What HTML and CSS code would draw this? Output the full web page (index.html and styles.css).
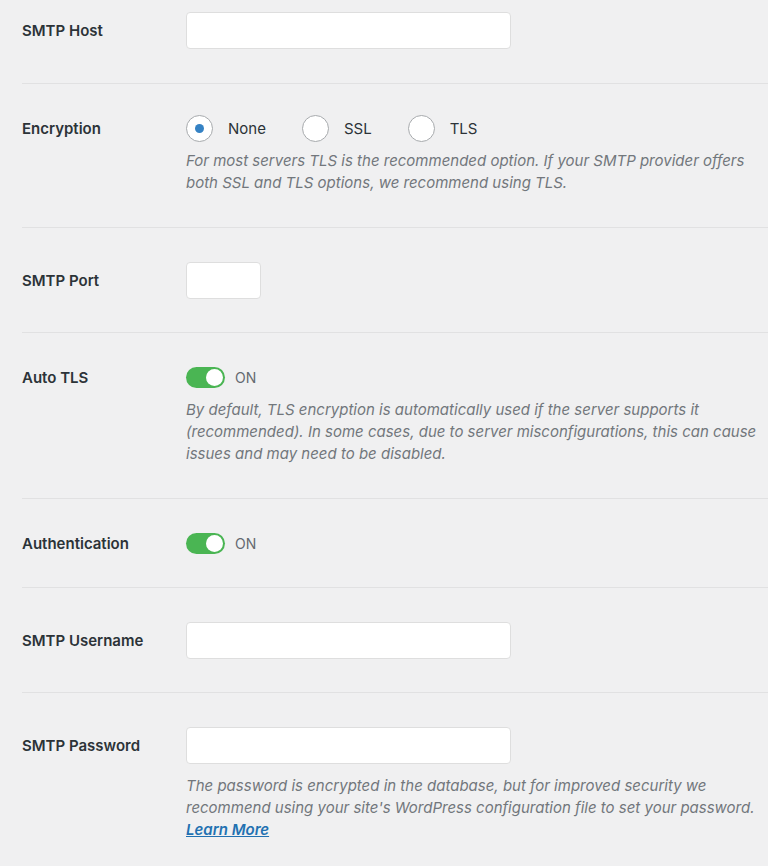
FILE: index.html
```html
<!DOCTYPE html>
<html lang="en">
<head>
<meta charset="utf-8">
<title>SMTP Settings</title>
<link rel="stylesheet" href="styles.css">
</head>
<body>
<div class="form">
  <div class="row first">
    <div class="label label-input">SMTP Host</div>
    <div class="field"><input class="text wide" type="text"></div>
  </div>

  <div class="row">
    <div class="label label-line">Encryption</div>
    <div class="field">
      <div class="line radios">
        <label class="radio"><span class="circle checked"></span><span>None</span></label>
        <label class="radio"><span class="circle"></span><span>SSL</span></label>
        <label class="radio"><span class="circle"></span><span>TLS</span></label>
      </div>
      <p class="desc">For most servers TLS is the recommended option. If your SMTP provider offers both SSL and TLS options, we recommend using TLS.</p>
    </div>
  </div>

  <div class="row">
    <div class="label label-input">SMTP Port</div>
    <div class="field"><input class="text narrow" type="text"></div>
  </div>

  <div class="row">
    <div class="label label-line">Auto TLS</div>
    <div class="field">
      <div class="line"><span class="toggle"><span class="knob"></span></span><span class="state">ON</span></div>
      <p class="desc">By default, TLS encryption is automatically used if the server supports it (recommended). In some cases, due to server misconfigurations, this can cause issues and may need to be disabled.</p>
    </div>
  </div>

  <div class="row">
    <div class="label label-line">Authentication</div>
    <div class="field">
      <div class="line"><span class="toggle"><span class="knob"></span></span><span class="state">ON</span></div>
    </div>
  </div>

  <div class="row">
    <div class="label label-input">SMTP Username</div>
    <div class="field"><input class="text wide" type="text"></div>
  </div>

  <div class="row last">
    <div class="label label-input">SMTP Password</div>
    <div class="field">
      <input class="text wide" type="password">
      <p class="desc">The password is encrypted in the database, but for improved security we recommend using your site's WordPress configuration file to set your password. <a href="#" class="learn">Learn More</a></p>
    </div>
  </div>
</div>
</body>
</html>
```

FILE: styles.css
```css
html, body {
  margin: 0;
  padding: 0;
  background: #f0f0f1;
}
body {
  font-family: Inter, "Liberation Sans", sans-serif;
  color: #2c3338;
  font-size: 15px;
}
.form {
  margin-left: 22px;
}
.row {
  display: grid;
  grid-template-columns: 164px 1fr;
  padding: 34px 0 33px;
  border-bottom: 1px solid #e1e1e2;
}
.row.first {
  padding-top: 12px;
  padding-bottom: 34px;
}
.row.last {
  border-bottom: none;
}
.label {
  font-weight: 600;
  font-size: 15px;
  color: #2c3338;
}
.label-input {
  line-height: 37px;
}
.label-line {
  line-height: 21px;
}
.text {
  display: block;
  box-sizing: border-box;
  height: 37px;
  margin: 0;
  background: #fff;
  border: 1px solid #dedede;
  border-radius: 4px;
  padding: 0 8px;
  font: inherit;
}
.text.wide {
  width: 325px;
}
.text.narrow {
  width: 75px;
}
.line {
  display: flex;
  align-items: center;
  height: 21px;
}
.radios {
  gap: 36px;
}
.radio {
  display: flex;
  align-items: center;
  gap: 15px;
  font-size: 15px;
  color: #2c3338;
}
.circle {
  box-sizing: border-box;
  width: 27px;
  height: 27px;
  border-radius: 50%;
  border: 1px solid #a7aaad;
  background: #fff;
  display: flex;
  align-items: center;
  justify-content: center;
}
.circle.checked::after {
  content: "";
  width: 9px;
  height: 9px;
  border-radius: 50%;
  background: #3582c4;
}
.toggle {
  box-sizing: border-box;
  width: 39px;
  height: 21px;
  border-radius: 11px;
  background: #4ab553;
  display: flex;
  align-items: center;
  justify-content: flex-end;
  padding: 0 2px;
}
.knob {
  width: 17px;
  height: 17px;
  border-radius: 50%;
  background: #fff;
}
.state {
  margin-left: 10px;
  font-size: 14px;
  color: #646970;
}
.desc {
  margin: 11px 0 0;
  font-style: italic;
  font-size: 15px;
  line-height: 22px;
  color: #72777c;
  max-width: 582px;
}
.learn {
  color: #2271b1;
  font-weight: 600;
  text-decoration: underline;
}
```
